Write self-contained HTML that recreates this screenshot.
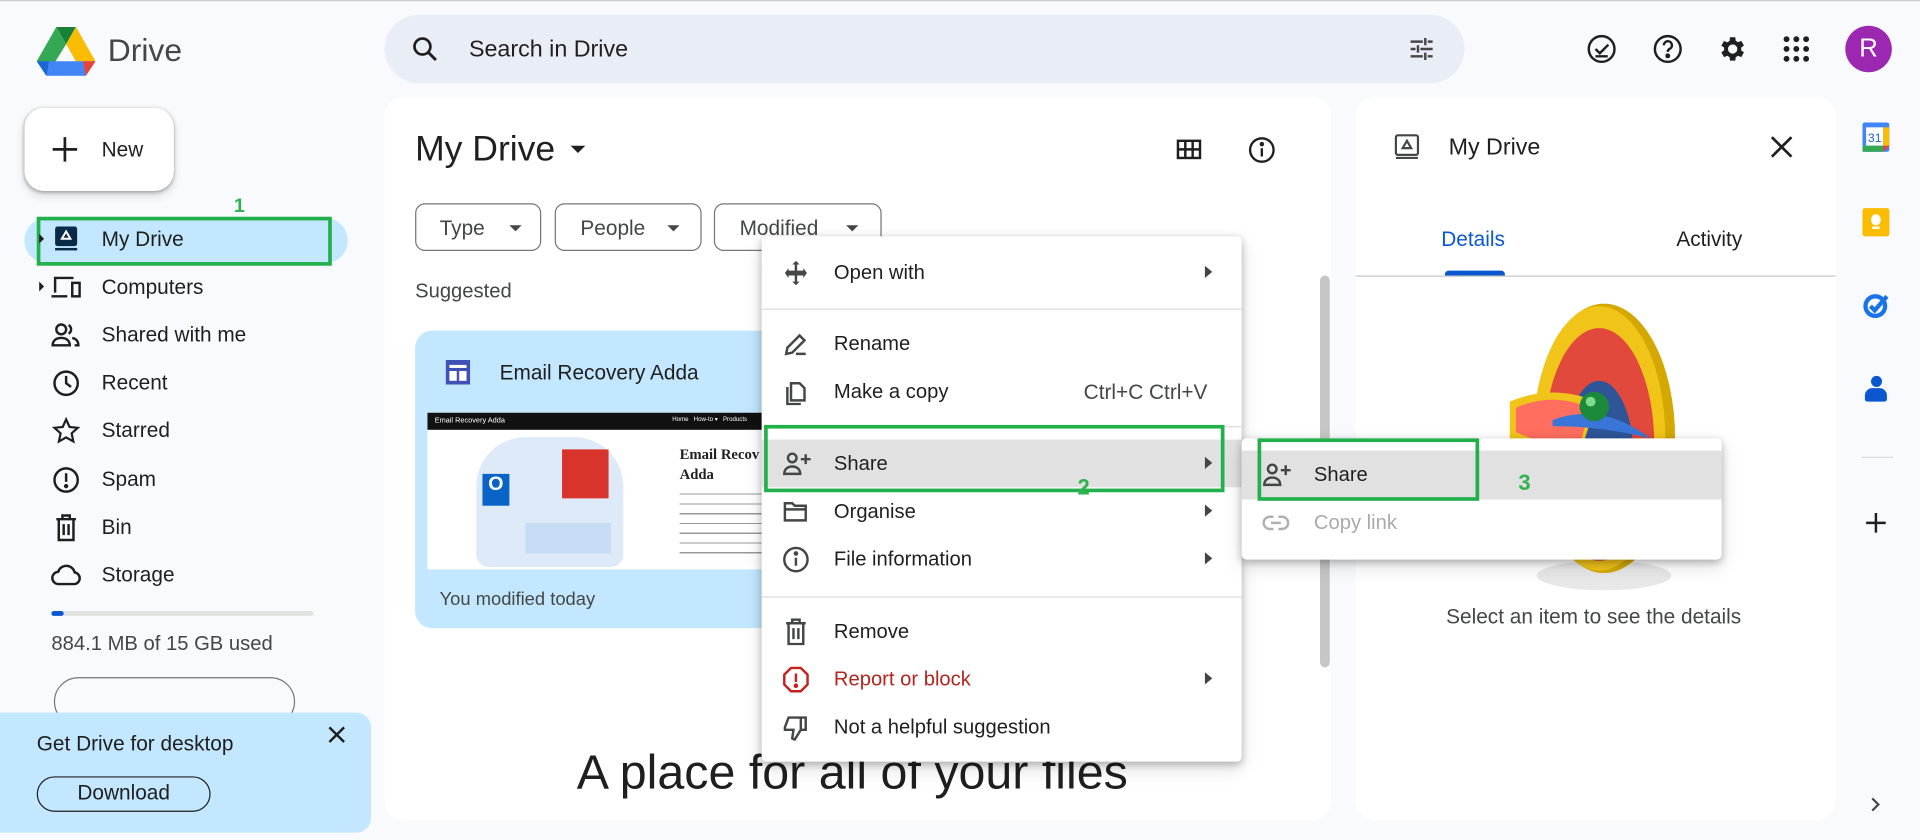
<!DOCTYPE html>
<html><head><meta charset="utf-8"><style>
*{box-sizing:border-box;margin:0;padding:0}
html,body{width:1920px;height:840px;overflow:hidden;background:#f8fafd;font-family:"Liberation Sans",Arial,sans-serif;color:#1f1f1f}
#w{position:absolute;left:0;top:0;width:1568px;height:686px;transform:scale(1.22449);transform-origin:0 0;background:#f8fafd}
.a{position:absolute}
.t{position:absolute;white-space:nowrap;line-height:1}
svg.i{position:absolute}
.g{border:3px solid #22b04b;position:absolute}
.gn{position:absolute;color:#2fb34f;font-weight:bold;font-size:18px}
.mi{position:absolute;left:0;width:392px;height:39px}
.mi .t{left:59px;top:12px;font-size:16.5px;color:#1f1f1f}
.mi svg{position:absolute;left:17px;top:9px}
.arr{position:absolute;left:362px;top:14px;width:0;height:0;border-left:6px solid #444;border-top:5px solid transparent;border-bottom:5px solid transparent}
</style></head><body><div id="w">
<div class="a" style="left:0;top:0;width:1568px;height:1px;background:#ccc"></div>
<svg class="i" style="left:30px;top:22px" width="48" height="40" viewBox="0 0 48 40">
<path d="M16 0h16L24 14z" fill="#188038"/><path d="M16 0L0 28l8 12 16-26z" fill="#34a853"/><path d="M32 0l16 28H32L24 14z" fill="#fbbc04"/><path d="M8 40h32l8-12H0z" fill="#4285f4"/><path d="M0 28h10l-2 12z" fill="#1967d2"/><path d="M48 28H38l2 12z" fill="#ea4335"/></svg>
<div class="t" style="left:88px;top:28px;font-size:26px;color:#444746">Drive</div>
<div class="a" style="left:314px;top:12px;width:882px;height:56px;border-radius:28px;background:#e9eef6"></div>
<svg class="i" style="left:335px;top:28px" width="24" height="24" viewBox="0 0 24 24"><circle cx="10" cy="10" r="6.5" fill="none" stroke="#1f1f1f" stroke-width="2.2"/><path d="M15 15l6 6" stroke="#1f1f1f" stroke-width="2.4"/></svg>
<div class="t" style="left:383px;top:31px;font-size:19px;color:#1f1f1f">Search in Drive</div>
<svg class="i" style="left:1149px;top:28px" width="24" height="24" viewBox="0 0 24 24" stroke="#444746" stroke-width="2" fill="none"><path d="M3 6h10M17 6h4M15 3v6M3 12h4M11 12h10M9 9v6M3 18h10M17 18h4M15 15v6"/></svg>
<svg class="i" style="left:1295px;top:27px" width="26" height="26" viewBox="0 0 26 26" fill="none" stroke="#1f1f1f" stroke-width="2"><circle cx="13" cy="13" r="10.5"/><path d="M8 13l3.5 3.5L18.5 9.5M8 19h10"/></svg>
<svg class="i" style="left:1349px;top:27px" width="26" height="26" viewBox="0 0 26 26" fill="none" stroke="#1f1f1f" stroke-width="2"><circle cx="13" cy="13" r="10.5"/><path d="M9.8 10a3.3 3.3 0 1 1 4.6 3c-1 .5-1.4 1.2-1.4 2.4"/><circle cx="13" cy="18.6" r="1" fill="#1f1f1f"/></svg>
<svg class="i" style="left:1402px;top:27px" width="26" height="26" viewBox="0 0 24 24"><path fill="#1f1f1f" d="M19.4 13a7.5 7.5 0 0 0 0-2l2.1-1.6-2-3.5-2.5 1a7 7 0 0 0-1.7-1L15 3.2h-4L10.7 6a7 7 0 0 0-1.7 1l-2.5-1-2 3.5L6.6 11a7.5 7.5 0 0 0 0 2l-2.1 1.6 2 3.5 2.5-1a7 7 0 0 0 1.7 1l.3 2.7h4l.3-2.7a7 7 0 0 0 1.7-1l2.5 1 2-3.5zM13 15.5a3.5 3.5 0 1 1 0-7 3.5 3.5 0 0 1 0 7z" transform="translate(-1 0)"/></svg>
<svg class="i" style="left:1456px;top:29px" width="22" height="22" viewBox="0 0 22 22" fill="#1f1f1f"><circle cx="3" cy="3" r="2.4"/><circle cx="11" cy="3" r="2.4"/><circle cx="19" cy="3" r="2.4"/><circle cx="3" cy="11" r="2.4"/><circle cx="11" cy="11" r="2.4"/><circle cx="19" cy="11" r="2.4"/><circle cx="3" cy="19" r="2.4"/><circle cx="11" cy="19" r="2.4"/><circle cx="19" cy="19" r="2.4"/></svg>
<div class="a" style="left:1507px;top:21px;width:38px;height:38px;border-radius:50%;background:#9c27b0;color:#fff;font-size:21px;text-align:center;line-height:38px">R</div>
<div class="a" style="left:20px;top:88px;width:122px;height:68px;border-radius:16px;background:#fff;box-shadow:0 1px 3px rgba(0,0,0,.3),0 4px 8px rgba(0,0,0,.12)"></div>
<svg class="i" style="left:42px;top:111px" width="22" height="22" viewBox="0 0 22 22"><path d="M11 1v20M1 11h20" stroke="#1f1f1f" stroke-width="2.2"/></svg>
<div class="t" style="left:83px;top:114px;font-size:17px;color:#1f1f1f">New</div>
<div class="a" style="left:20px;top:178px;width:264px;height:37px;border-radius:19px;background:#c2e7ff"></div>
<div class="g" style="left:30px;top:177px;width:241px;height:40px"></div>
<div class="gn" style="left:191px;top:160px;font-size:16px">1</div>
<div class="a" style="left:32px;top:191px;border-left:4px solid #1f1f1f;border-top:4px solid transparent;border-bottom:4px solid transparent"></div>
<div class="a" style="left:32px;top:230px;border-left:4px solid #1f1f1f;border-top:4px solid transparent;border-bottom:4px solid transparent"></div>
<svg class="i" style="left:43px;top:184px" width="22" height="22" viewBox="0 0 22 22"><rect x="2" y="1" width="18" height="16" rx="2" fill="#0b2a4a"/><path d="M11 5l3.5 6h-7z" fill="none" stroke="#fff" stroke-width="1.6"/><rect x="2" y="18.5" width="18" height="2" fill="#0b2a4a"/></svg>
<svg class="i" style="left:41px;top:224px" width="26" height="22" viewBox="0 0 26 22" fill="none" stroke="#1f1f1f" stroke-width="2"><path d="M4 15V3h15"/><path d="M1 18h13"/><rect x="18" y="7" width="6" height="11"/></svg>
<svg class="i" style="left:42px;top:263px" width="24" height="22" viewBox="0 0 24 22" fill="none" stroke="#1f1f1f" stroke-width="2"><circle cx="8" cy="6" r="4"/><path d="M1 19c0-4 3-6 7-6s7 2 7 6z"/><path d="M14 2.5a4 4 0 0 1 0 7M17 13c3 .5 5 2.5 5 6h-3"/></svg>
<svg class="i" style="left:42px;top:301px" width="24" height="24" viewBox="0 0 24 24" fill="none" stroke="#1f1f1f" stroke-width="2"><circle cx="12" cy="12" r="9.5"/><path d="M12 6v6l4 3"/></svg>
<svg class="i" style="left:42px;top:340px" width="24" height="24" viewBox="0 0 24 24" fill="none" stroke="#1f1f1f" stroke-width="1.8"><path d="M12 2.5l2.8 6.2 6.7.7-5 4.5 1.4 6.6L12 17.2l-5.9 3.3 1.4-6.6-5-4.5 6.7-.7z"/></svg>
<svg class="i" style="left:42px;top:380px" width="24" height="24" viewBox="0 0 24 24" fill="none" stroke="#1f1f1f" stroke-width="2"><circle cx="12" cy="12" r="9.5"/><path d="M12 6.5v7"/><circle cx="12" cy="17" r=".8" fill="#1f1f1f"/></svg>
<svg class="i" style="left:43px;top:419px" width="22" height="24" viewBox="0 0 22 24" fill="none" stroke="#1f1f1f" stroke-width="2"><path d="M3 5h16M8 5V2h6v3M5 5v17h12V5M9 9v9M13 9v9"/></svg>
<svg class="i" style="left:41px;top:459px" width="26" height="20" viewBox="0 0 26 20" fill="none" stroke="#1f1f1f" stroke-width="2"><path d="M7 18a5 5 0 0 1-.5-10A7 7 0 0 1 20 8.5a4.8 4.8 0 0 1 0 9.5z"/></svg>
<div class="t" style="left:83px;top:187px;font-size:17px">My Drive</div>
<div class="t" style="left:83px;top:226px;font-size:17px">Computers</div>
<div class="t" style="left:83px;top:265px;font-size:17px">Shared with me</div>
<div class="t" style="left:83px;top:304px;font-size:17px">Recent</div>
<div class="t" style="left:83px;top:343px;font-size:17px">Starred</div>
<div class="t" style="left:83px;top:383px;font-size:17px">Spam</div>
<div class="t" style="left:83px;top:422px;font-size:17px">Bin</div>
<div class="t" style="left:83px;top:461px;font-size:17px">Storage</div>
<div class="a" style="left:42px;top:499px;width:214px;height:4px;border-radius:2px;background:#e1e3e1"></div>
<div class="a" style="left:42px;top:499px;width:10px;height:4px;border-radius:2px;background:#0b57d0"></div>
<div class="t" style="left:42px;top:518px;font-size:16.5px;color:#444746">884.1 MB of 15 GB used</div>
<div class="a" style="left:44px;top:553px;width:197px;height:40px;border-radius:20px;border:1px solid #747775"></div>
<div class="a" style="left:0;top:582px;width:303px;height:98px;border-radius:0 12px 12px 0;background:#c2e7ff"></div>
<div class="t" style="left:30px;top:599px;font-size:17px">Get Drive for desktop</div>
<svg class="i" style="left:267px;top:592px" width="16" height="16" viewBox="0 0 16 16"><path d="M2 2l12 12M14 2L2 14" stroke="#1f1f1f" stroke-width="2"/></svg>
<div class="a" style="left:30px;top:634px;width:142px;height:29px;border-radius:15px;border:1.5px solid #1f1f1f;font-size:17px;text-align:center;line-height:26px">Download</div>
<div class="a" style="left:314px;top:79px;width:773px;height:591px;border-radius:16px;background:#fff"></div>
<div class="t" style="left:339px;top:108px;font-size:29px">My Drive</div>
<div class="a" style="left:466px;top:119px;border-top:6px solid #1f1f1f;border-left:6px solid transparent;border-right:6px solid transparent"></div>
<svg class="i" style="left:960px;top:113px" width="22" height="18" viewBox="0 0 22 18" fill="none" stroke="#1f1f1f" stroke-width="2"><rect x="2" y="2" width="18" height="14"/><path d="M8 2v14M14 2v14M2 9h18"/></svg>
<svg class="i" style="left:1019px;top:111px" width="23" height="23" viewBox="0 0 24 24" fill="none" stroke="#1f1f1f" stroke-width="2"><circle cx="12" cy="12" r="10"/><path d="M12 10.5v7"/><circle cx="12" cy="7" r=".9" fill="#1f1f1f"/></svg>
<div class="a" style="left:339px;top:166px;width:103px;height:39px;border:1px solid #747775;border-radius:8px"></div>
<div class="t" style="left:359px;top:178px;font-size:17px;color:#444746">Type</div>
<div class="a" style="left:416px;top:184px;border-top:5px solid #444746;border-left:5px solid transparent;border-right:5px solid transparent"></div>
<div class="a" style="left:453px;top:166px;width:120px;height:39px;border:1px solid #747775;border-radius:8px"></div>
<div class="t" style="left:474px;top:178px;font-size:17px;color:#444746">People</div>
<div class="a" style="left:545px;top:184px;border-top:5px solid #444746;border-left:5px solid transparent;border-right:5px solid transparent"></div>
<div class="a" style="left:583px;top:166px;width:137px;height:39px;border:1px solid #747775;border-radius:8px"></div>
<div class="t" style="left:604px;top:178px;font-size:17px;color:#444746">Modified</div>
<div class="a" style="left:691px;top:184px;border-top:5px solid #444746;border-left:5px solid transparent;border-right:5px solid transparent"></div>
<div class="t" style="left:339px;top:230px;font-size:16.5px;color:#444746">Suggested</div>
<div class="a" style="left:339px;top:270px;width:320px;height:243px;border-radius:14px;background:#c2e7ff"></div>
<svg class="i" style="left:364px;top:294px" width="20" height="20" viewBox="0 0 20 20"><rect width="20" height="20" fill="#3f51b5"/><rect x="3" y="4" width="14" height="2.5" fill="#fff"/><rect x="3" y="9" width="6" height="8" fill="#fff"/><rect x="11" y="9" width="6" height="8" fill="#fff"/></svg>
<div class="t" style="left:408px;top:296px;font-size:17px">Email Recovery Adda</div>
<div class="a" style="left:349px;top:337px;width:300px;height:128px;background:#fff;overflow:hidden">
 <div class="a" style="left:0;top:0;width:300px;height:14px;background:#111"></div>
 <div class="t" style="left:6px;top:4px;font-size:6px;color:#fff">Email Recovery Adda</div>
 <div class="t" style="left:200px;top:4px;font-size:5px;color:#fff">Home &nbsp; How-to ▾ &nbsp; Products</div>
 <div class="a" style="left:40px;top:20px;width:120px;height:106px;background:#dfeaf8;border-radius:40px 40px 10px 10px"></div>
 <div class="a" style="left:45px;top:50px;width:22px;height:26px;background:#0a64c8;color:#fff;font-size:16px;text-align:center;font-weight:bold">O</div>
 <div class="a" style="left:110px;top:30px;width:38px;height:40px;background:#d9342b"></div>
 <div class="a" style="left:80px;top:90px;width:70px;height:25px;background:#c8dcf5"></div>
 <div class="t" style="left:206px;top:28px;font-size:12px;font-weight:bold;font-family:'Liberation Serif',serif">Email Recov</div>
 <div class="t" style="left:206px;top:44px;font-size:12px;font-weight:bold;font-family:'Liberation Serif',serif">Adda</div>
 <div class="a" style="left:206px;top:62px;width:90px;height:60px;background:repeating-linear-gradient(#fff 0 4px,#999 4px 5px,#fff 5px 8px)"></div>
</div>
<div class="t" style="left:359px;top:482px;font-size:15px;color:#444746">You modified today</div>
<div class="t" style="left:471px;top:612px;font-size:39.5px;color:#1f1f1f">A place for all of your files</div>
<div class="a" style="left:1078px;top:225px;width:8px;height:320px;border-radius:4px;background:#c4c7c5"></div>
<div class="a" style="left:1107px;top:79px;width:392px;height:591px;border-radius:16px;background:#fff"></div>
<svg class="i" style="left:1138px;top:109px" width="22" height="22" viewBox="0 0 22 22" fill="none" stroke="#444746" stroke-width="1.8"><rect x="2" y="1.5" width="18" height="16" rx="1.5"/><path d="M11 6l3.5 6h-7z"/><path d="M2 20h18"/></svg>
<div class="t" style="left:1183px;top:111px;font-size:19px">My Drive</div>
<svg class="i" style="left:1445px;top:110px" width="20" height="20" viewBox="0 0 20 20"><path d="M2 2l16 16M18 2L2 18" stroke="#1f1f1f" stroke-width="2.2"/></svg>
<div class="t" style="left:1177px;top:187px;font-size:17px;color:#0b57d0">Details</div>
<div class="t" style="left:1369px;top:187px;font-size:17px;color:#1f1f1f">Activity</div>
<div class="a" style="left:1180px;top:221px;width:49px;height:4px;border-radius:3px 3px 0 0;background:#0b57d0"></div>
<div class="a" style="left:1107px;top:225px;width:392px;height:1px;background:#c4c7c5"></div>
<svg class="i" style="left:1228px;top:248px" width="150" height="240" viewBox="0 0 150 240">
<ellipse cx="82" cy="222" rx="55" ry="12" fill="#e8e8e8"/>
<ellipse cx="82" cy="110" rx="58" ry="110" fill="#d4a800"/>
<ellipse cx="78" cy="110" rx="54" ry="108" fill="#f0c419"/>
<ellipse cx="78" cy="115" rx="45" ry="95" fill="#e0493c"/>
<ellipse cx="78" cy="125" rx="28" ry="62" fill="#2e5597"/>
<path d="M5 80 Q40 65 76 80 L60 130 L5 110z" fill="#f0c419"/>
<path d="M10 85 Q40 72 70 85 L60 125 L10 105z" fill="#ff6e5e"/>
<path d="M40 95 Q80 80 120 110 Q80 100 40 100z" fill="#3a76d8"/>
<circle cx="74" cy="84" r="12" fill="#1a8a3a"/>
<circle cx="71" cy="80" r="4" fill="#7fdc8a"/>
</svg>
<div class="t" style="left:1181px;top:495px;font-size:17px;color:#444746">Select an item to see the details</div>
<svg class="i" style="left:1521px;top:100px" width="22" height="24" viewBox="0 0 22 24"><rect width="22" height="24" rx="2" fill="#4285f4"/><rect x="3" y="4" width="14" height="15" fill="#fff"/><rect x="17" y="4" width="5" height="15" fill="#fbbc04"/><rect x="0" y="19" width="17" height="5" fill="#34a853"/><path d="M17 19h5l-5 5z" fill="#ea4335"/><text x="10" y="16" font-size="10" text-anchor="middle" fill="#1967d2" font-family="Liberation Sans">31</text></svg>
<div class="a" style="left:1521px;top:170px;width:22px;height:23px;border-radius:2px;background:#fbbc04"></div>
<div class="a" style="left:1528px;top:175px;width:8px;height:9px;border-radius:50%;background:#fff"></div>
<div class="a" style="left:1529px;top:185px;width:6px;height:2px;background:#fff"></div>
<svg class="i" style="left:1521px;top:238px" width="23" height="23" viewBox="0 0 23 23"><circle cx="10.5" cy="12" r="8" fill="none" stroke="#1a73e8" stroke-width="3.5"/><path d="M6.5 12l3.5 3.5L20 4" fill="none" stroke="#1a73e8" stroke-width="3.5"/></svg>
<div class="a" style="left:1528px;top:307px;width:9px;height:9px;border-radius:50%;background:#0b57d0"></div>
<div class="a" style="left:1523px;top:317px;width:18px;height:11px;border-radius:6px 6px 2px 2px;background:#0b57d0"></div>
<div class="a" style="left:1520px;top:373px;width:26px;height:1px;background:#dadce0"></div>
<svg class="i" style="left:1523px;top:418px" width="18" height="18" viewBox="0 0 18 18"><path d="M9 1v16M1 9h16" stroke="#1f1f1f" stroke-width="2"/></svg>
<svg class="i" style="left:1527px;top:650px" width="10" height="14" viewBox="0 0 10 14"><path d="M2 2l5 5-5 5" fill="none" stroke="#444746" stroke-width="1.8"/></svg>
<div class="a" style="left:622px;top:193px;width:392px;height:429px;background:#fff;border-radius:4px;box-shadow:0 2px 6px rgba(0,0,0,.25),0 6px 16px rgba(0,0,0,.12)">
 <div class="mi" style="top:10px"><svg width="22" height="22" viewBox="0 0 22 22" fill="#444746"><path d="M11 1l3 3h-2v5h5V7l3 4-3 4v-2h-5v5h2l-3 3-3-3h2v-5H5v2l-3-4 3-4v2h5V4H8z"/></svg><div class="t">Open with</div><div class="arr"></div></div>
 <div class="a" style="left:0;top:59px;width:392px;height:1px;background:#dadce0"></div>
 <div class="mi" style="top:68px"><svg width="22" height="22" viewBox="0 0 22 22" fill="none" stroke="#444746" stroke-width="2"><path d="M3 19l1-5L14 4l4 4L8 18z"/><path d="M11 19h8"/></svg><div class="t">Rename</div></div>
 <div class="mi" style="top:107px"><svg width="22" height="22" viewBox="0 0 22 22" fill="none" stroke="#444746" stroke-width="2"><path d="M7 4h7l4 4v10H7z"/><path d="M4 7v14h11"/></svg><div class="t">Make a copy</div><div class="t" style="left:263px;color:#444746;font-size:17px">Ctrl+C Ctrl+V</div></div>
 <div class="a" style="left:0;top:155px;width:392px;height:1px;background:#dadce0"></div>
 <div class="mi" style="top:166px;background:#e1e1e1"><svg width="24" height="22" viewBox="0 0 24 22" fill="none" stroke="#444746" stroke-width="2"><circle cx="8" cy="6" r="3.5"/><path d="M1.5 19c0-4 3-6 6.5-6s6.5 2 6.5 6z"/><path d="M19 3v8M15 7h8"/></svg><div class="t">Share</div><div class="arr"></div></div>
 <div class="mi" style="top:205px"><svg width="22" height="22" viewBox="0 0 22 22" fill="none" stroke="#444746" stroke-width="2"><path d="M2 4h6l2 2h9v12H2z"/><path d="M2 9h17"/></svg><div class="t">Organise</div><div class="arr"></div></div>
 <div class="mi" style="top:244px"><svg width="22" height="22" viewBox="0 0 22 22" fill="none" stroke="#444746" stroke-width="2"><circle cx="11" cy="11" r="9.5"/><path d="M11 9.5v6.5"/><circle cx="11" cy="6" r=".9" fill="#444746"/></svg><div class="t">File information</div><div class="arr"></div></div>
 <div class="a" style="left:0;top:294px;width:392px;height:1px;background:#dadce0"></div>
 <div class="mi" style="top:303px"><svg width="22" height="22" viewBox="0 0 22 22" fill="none" stroke="#444746" stroke-width="2"><path d="M3 4h16M8 4V1h6v3M5 4v17h12V4M9 8v9M13 8v9"/></svg><div class="t">Remove</div></div>
 <div class="mi" style="top:342px"><svg width="22" height="22" viewBox="0 0 22 22" fill="none" stroke="#c5221f" stroke-width="2"><path d="M7 1.5h8l5.5 5.5v8L15 20.5H7L1.5 15V7z"/><path d="M11 6v7"/><circle cx="11" cy="16" r=".9" fill="#c5221f"/></svg><div class="t" style="color:#b3261e">Report or block</div><div class="arr"></div></div>
 <div class="mi" style="top:381px"><svg width="22" height="22" viewBox="0 0 22 22" fill="none" stroke="#444746" stroke-width="2"><path d="M15 3H5L2 11v2h7l-1 7 2 1 5-8zM15 3h4v10h-4"/></svg><div class="t">Not a helpful suggestion</div></div>
</div>
<div class="g" style="left:624px;top:347px;width:376px;height:55px"></div>
<div class="gn" style="left:880px;top:388px">2</div>
<div class="a" style="left:1014px;top:358px;width:392px;height:99px;background:#fff;border-radius:4px;box-shadow:0 2px 6px rgba(0,0,0,.25),0 6px 16px rgba(0,0,0,.12)">
 <div class="a" style="left:0;top:10px;width:392px;height:40px;background:#e1e1e1"></div>
 <svg class="i" style="left:17px;top:19px" width="24" height="22" viewBox="0 0 24 22" fill="none" stroke="#444746" stroke-width="2"><circle cx="8" cy="6" r="3.5"/><path d="M1.5 19c0-4 3-6 6.5-6s6.5 2 6.5 6z"/><path d="M19 3v8M15 7h8"/></svg>
 <div class="t" style="left:59px;top:22px;font-size:16.5px">Share</div>
 <svg class="i" style="left:17px;top:60px" width="22" height="18" viewBox="0 0 22 18" fill="none" stroke="#b0b0b0" stroke-width="2"><path d="M9 4H6a5 5 0 0 0 0 10h3M13 4h3a5 5 0 0 1 0 10h-3M7 9h8"/></svg>
 <div class="t" style="left:59px;top:61px;font-size:16.5px;color:#aaa">Copy link</div>
</div>
<div class="g" style="left:1027px;top:358px;width:181px;height:51px"></div>
<div class="gn" style="left:1240px;top:384px">3</div>
</div></body></html>
